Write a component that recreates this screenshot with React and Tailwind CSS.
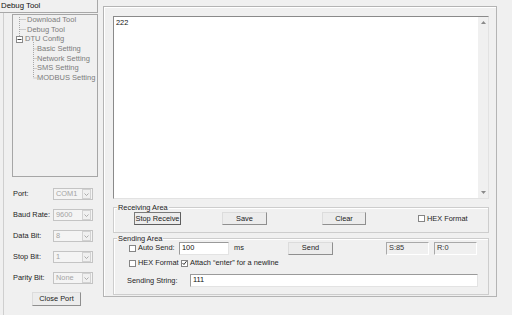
import React from "react";

const Check = ({ checked }) => (
  <span className="w-[7px] h-[7px] border border-[#858585] bg-white flex items-center justify-center shrink-0">
    {checked && (
      <svg width="6" height="6" viewBox="0 0 6 6">
        <path d="M0.6 3 L2.3 4.8 L5.4 0.8" stroke="#222" strokeWidth="1.1" fill="none" />
      </svg>
    )}
  </span>
);

const Combo = ({ value }) => (
  <div className="w-[40px] h-[12px] border border-[#c4c4c4] bg-[#f4f4f4] flex items-center">
    <span className="flex-1 pl-[2px] text-[#a4a4a4] leading-[10px]">{value}</span>
    <span className="w-[9px] h-[10px] mr-[1px] border border-[#d2d2d2] bg-[#f0f0f0] flex items-center justify-center">
      <svg width="5" height="3" viewBox="0 0 5 3">
        <path d="M0.5 0.5 L2.5 2.5 L4.5 0.5" stroke="#9a9a9a" strokeWidth="0.8" fill="none" />
      </svg>
    </span>
  </div>
);

const Btn = ({ children, w, focus }) => (
  <div
    className={
      "h-[13px] flex items-center justify-center bg-[#ececec] border leading-[10px] text-[#1a1a1a] " +
      (focus
        ? "border-[#7a7a7a] border-r-[#5e5e5e] border-b-[#5e5e5e]"
        : "border-[#dcdcdc] border-r-[#8f8f8f] border-b-[#8f8f8f]")
    }
    style={{ width: w }}
  >
    {children}
  </div>
);

const FormRow = ({ label, value }) => (
  <div className="flex items-center h-[12px]">
    <span className="w-[41px] pl-[1px] text-[#1e1e1e]">{label}</span>
    <Combo value={value} />
  </div>
);

export default function App() {
  const treeRow = "h-[9.7px] leading-[9.7px] whitespace-nowrap";
  return (
    <div
      className="w-[512px] h-[315px] bg-[#f0f0f0] flex overflow-hidden text-[7.4px] text-[#1e1e1e]"
      style={{ fontFamily: '"Liberation Sans", Arial, sans-serif' }}
    >
      {/* Left column */}
      <div className="w-[100px] flex flex-col shrink-0">
        <div className="w-[98px] h-[13px] border-b border-r border-[#a8a8a8] pl-[1px] leading-[11px] text-[7.8px] text-[#111]">
          Debug Tool
        </div>
        <div className="flex-1 ml-[3px] border-l border-[#cfcfcf] pl-[8px] pt-[1px] flex flex-col">
          <div className="relative w-[86px] h-[163px] border border-[#a6a6a6] text-[#7c7c7c] text-[7.5px]">
            <svg className="absolute left-0 top-0" width="84" height="80">
              <g stroke="#a8a8a8" strokeWidth="1" strokeDasharray="1 1" fill="none">
                <path d="M6.5 2 V21" />
                <path d="M6.5 4.5 H13" />
                <path d="M6.5 14.5 H13" />
                <path d="M20.5 27 V63" />
                <path d="M20.5 34 H24" />
                <path d="M20.5 43.5 H24" />
                <path d="M20.5 53.5 H24" />
                <path d="M20.5 63 H24" />
              </g>
              <rect x="3.5" y="21.5" width="6" height="6" fill="#fff" stroke="#8a8a8a" strokeWidth="1" />
              <path d="M4.5 24.5 H8.5" stroke="#444" strokeWidth="1" />
            </svg>
            <div className={treeRow + " pl-[14px]"}>Download Tool</div>
            <div className={treeRow + " pl-[14px]"}>Debug Tool</div>
            <div className={treeRow + " pl-[12px]"}>DTU Config</div>
            <div className={treeRow + " pl-[24px]"}>Basic Setting</div>
            <div className={treeRow + " pl-[24px]"}>Network Setting</div>
            <div className={treeRow + " pl-[24px]"}>SMS Setting</div>
            <div className={treeRow + " pl-[24px]"}>MODBUS Setting</div>
          </div>
          <div className="mt-[11px] flex flex-col gap-[9px]">
            <FormRow label="Port:" value="COM1" />
            <FormRow label="Baud Rate:" value="9600" />
            <FormRow label="Data Bit:" value="8" />
            <FormRow label="Stop Bit:" value="1" />
            <FormRow label="Parity Bit:" value="None" />
          </div>
          <div className="mt-[8px] ml-[20px]">
            <div className="w-[49px] h-[14px] flex items-center justify-center bg-[#ececec] border border-[#dcdcdc] border-r-[#8f8f8f] border-b-[#8f8f8f] text-[#1a1a1a]">
              Close Port
            </div>
          </div>
        </div>
      </div>

      {/* Main frame */}
      <div className="ml-[3px] mt-[6px] w-[394px] h-[291px] border border-[#b4b4b4] shadow-[inset_1px_1px_0_#fff] pl-[9px] pt-[9px] flex flex-col shrink-0">
        {/* Receive text area */}
        <div className="w-[376px] h-[183px] border border-[#e2e2e2] border-t-[#8a8a8a] border-l-[#8a8a8a] bg-white flex">
          <div className="flex-1 pl-[2px] pt-[2px] leading-[8px] text-[#111]">222</div>
          <div className="w-[10px] bg-[#f0f0f0] flex flex-col justify-between items-center py-[4px]">
            <svg width="5" height="3" viewBox="0 0 5 3">
              <path d="M0 3 L2.5 0 L5 3 Z" fill="#8a8a8a" />
            </svg>
            <svg width="5" height="3" viewBox="0 0 5 3">
              <path d="M0 0 L2.5 3 L5 0 Z" fill="#8a8a8a" />
            </svg>
          </div>
        </div>

        {/* Receiving Area */}
        <div className="relative mt-[8px] w-[376px] h-[26px] border border-[#cdcdcd] shadow-[inset_1px_1px_0_#fff] flex items-start pt-[4px]">
          <span className="absolute -top-[5px] left-[3px] bg-[#f0f0f0] px-[1px] leading-[9px]">Receiving Area</span>
          <div className="ml-[20px]">
            <Btn w={47} focus>Stop Receive</Btn>
          </div>
          <div className="ml-[41px]">
            <Btn w={45}>Save</Btn>
          </div>
          <div className="ml-[55px]">
            <Btn w={44}>Clear</Btn>
          </div>
          <div className="ml-[52px] h-[13px] flex items-center">
            <Check />
            <span className="ml-[2px]">HEX Format</span>
          </div>
        </div>

        {/* Sending Area */}
        <div className="relative mt-[5px] w-[376px] h-[57px] border border-[#cdcdcd] shadow-[inset_1px_1px_0_#fff] pt-[1px] flex flex-col">
          <span className="absolute -top-[5px] left-[3px] bg-[#f0f0f0] px-[1px] leading-[9px]">Sending Area</span>
          <div className="h-[16px] flex items-center">
            <div className="ml-[15px]">
              <Check />
            </div>
            <span className="ml-[2px] w-[41px]">Auto Send:</span>
            <div className="w-[50px] h-[13px] bg-white border border-[#e3e3e3] border-t-[#9a9a9a] border-l-[#9a9a9a] pl-[2px] leading-[10px] text-[#111]">
              100
            </div>
            <span className="ml-[5px] w-[54px]">ms</span>
            <Btn w={45}>Send</Btn>
            <div className="ml-[53px] w-[43px] h-[13px] border border-[#ffffff] border-t-[#a9a9a9] border-l-[#a9a9a9] pl-[2px] leading-[10px] text-[#333]">
              S:85
            </div>
            <div className="ml-[5px] w-[43px] h-[13px] border border-[#ffffff] border-t-[#a9a9a9] border-l-[#a9a9a9] pl-[2px] leading-[10px] text-[#333]">
              R:0
            </div>
          </div>
          <div className="h-[14px] flex items-center">
            <div className="ml-[15px]">
              <Check />
            </div>
            <span className="ml-[2px] w-[41px]">HEX Format</span>
            <div className="ml-[2px]">
              <Check checked />
            </div>
            <span className="ml-[2px]">Attach “enter” for a newline</span>
          </div>
          <div className="mt-[4px] h-[13px] flex items-center">
            <span className="ml-[13px] w-[63px]">Sending String:</span>
            <div className="w-[288px] h-[13px] bg-white border border-[#e3e3e3] border-t-[#9a9a9a] border-l-[#9a9a9a] pl-[2px] leading-[10px] text-[#111]">
              111
            </div>
          </div>
        </div>
      </div>
    </div>
  );
}
